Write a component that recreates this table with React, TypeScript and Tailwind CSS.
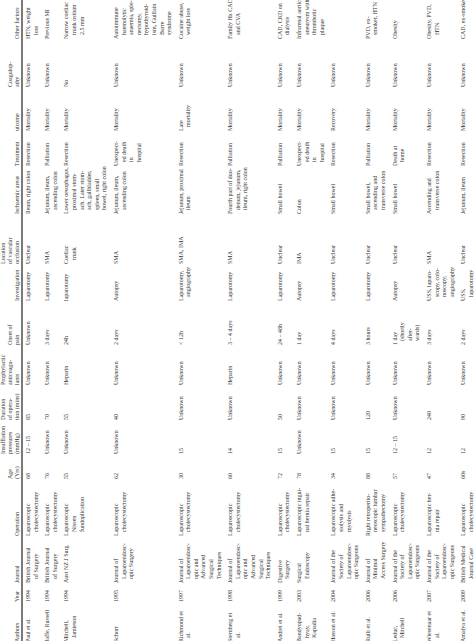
import React from "react";

const GRID =
  "grid grid-cols-[40px_19px_47px_57px_25px_34px_35px_40px_44px_37px_50px_48px_35px_44px_48px_60px]";

const headers = [
  "Authors",
  "Year",
  "Journal",
  "Operation",
  "Age\n(Yrs)",
  "Insufflation\npressures\n(mmHg)",
  "Duration\nof opera-\ntion (mins)",
  "Prophylactic\nanticoagu-\nlants",
  "Onset of\npain",
  "Investigation",
  "Location\nof vascular\nocclusion",
  "Ischaemic areas",
  "Treatment",
  "utcome",
  "Coagulop-\nathy",
  "Other factors",
];

const rows: string[][] = [
  ["Paul et al.", "1994", "British Journal\nof Surgery", "Laparoscopic\ncholecystectomy", "68", "12 – 15", "85", "Unknown", "Unknown", "Laparotomy", "Unclear", "Ileum, right colon", "Resection", "Mortality", "Unknown", "HTN, weight\nloss"],
  ["Jaffe, Russell", "1994", "British Journal\nof Surgery", "Laparoscopic\ncholecystectomy", "76", "Unknown", "70", "Unknown", "3 days", "Laparotomy", "SMA", "Jejunum, ileum,\nascending colon", "Palliation", "Mortality", "Unknown", "Previous MI"],
  ["Mitchell,\nJamieson", "1994", "Aust NZ J Surg", "Laparoscopic\nNissen\nfundoplication", "55", "Unknown", "55", "Heparin", "24h", "laparotomy", "Coeliac\ntrunk", "Lower oesophagus,\nproximal stom-\nach. Later stom-\nach, gallbladder,\nspleen, small\nbowel, right colon", "Resection", "Mortality", "No", "Narrow coeliac\ntrunk ostium\n2.5 mm"],
  ["Schorr", "1995", "Journal of\nLaparoendosc-\nopic Surgery", "Laparoscopic\ncholecystectomy", "62", "Unknown", "40", "Unknown", "2 days", "Autopsy", "SMA", "Jejunum, ileum,\nascending colon", "Unexpect-\ned death\nin\nhospital", "Mortality", "Unknown", "Autoimmune\nhaemolytic\nanaemia, sple-\nnectomy,\nhypothyroid-\nism, Guillain\nBarre\nsyndrome"],
  ["Richmond et\nal.", "1997", "Journal of\nLaparoendosc-\nopic and\nAdvanced\nSurgical\nTechniques", "Laparoscopic\ncholecystectomy", "30", "15", "Unknown", "Unknown", "< 12h", "Laparotomy,\nangiography", "SMA, IMA", "Jejunum, proximal\nileum", "Resection", "Late\nmortality", "Unknown", "Cocaine abuse,\nweight loss"],
  ["Sternberg et\nal.", "1998", "Journal of\nLaparoendosc-\nopic and\nAdvanced\nSurgical\nTechniques", "Laparoscopic\ncholecystectomy", "60", "14", "Unknown", "Heparin", "3 – 4 days", "Laparotomy", "SMA", "Fourth part of duo-\ndenum, jejunum,\nileum, right colon", "Palliation", "Mortality", "Unknown", "Family Hx CAD\nand CVA"],
  ["Andrei et al.", "1999", "Digestive\nSurgery", "Laparoscopic\ncholecystectomy", "72", "15", "50", "Unknown", "24 – 48h", "Laparotomy", "Unclear", "Small bowel", "Palliation", "Mortality", "Unknown", "CAD, CKD on\ndialysis"],
  ["Bandyopad-\nhyay,\nKapadia", "2003", "Surgical\nEndoscopy", "Laparoscopic ingui-\nnal hernia repair", "78", "Unknown", "Unknown", "Unknown", "1 day", "Autopsy", "IMA", "Colon", "Unexpect-\ned death\nin\nhospital", "Mortality", "Unknown", "Infrarenal aortic\naneurysm with\nthrombotic\nplaque"],
  ["Hasson et al.", "2004", "Journal of the\nSociety of\nLaparoendosc-\nopic Surgeons", "Laparoscopic adhe-\nsiolysis and\nmyolysis", "34", "15", "Unknown", "Unknown", "4 days", "Laparotomy", "Unclear", "Small bowel", "Resection", "Recovery", "Unknown", ""],
  ["Rulli et al.", "2006", "Journal of\nMinimal\nAccess Surgery", "Right retroperito-\nneoscopic lumbar\nsympathectomy", "88", "15", "120", "Unknown", "3 hours", "Laparotomy", "Unclear", "Small bowel,\nascending and\ntransverse colon", "Palliation", "Mortality", "Unknown", "PVD, ex-\nsmoker, HTN"],
  ["Leduc,\nMitchell", "2006", "Journal of the\nSociety of\nLaparoendosc-\nopic Surgeons", "Laparoscopic\ncholecystectomy", "57", "12 – 15", "Unknown", "Unknown", "1 day\n(shortly\nafter-\nwards)", "Autopsy", "Unclear", "Small bowel", "Death at\nhome", "Mortality", "Unknown", "Obesity"],
  ["Wiesenaar et\nal.", "2007", "Journal of the\nSociety of\nLaparoendosc-\nopic Surgeons", "Laparoscopic her-\nnia repair", "47", "12", "240", "Unknown", "3 days", "USS, laparo-\nscopy, colo-\nnoscopy,\nangiography", "SMA", "Ascending and\ntransverse colon", "Resection", "Mortality", "Unknown", "Obesity, PVD,\nHTN"],
  ["Amalya et al.", "2009", "British Medical\nJournal Case\nReports", "Laparoscopic\ncholecystectomy", "60s", "12", "90", "Unknown", "2 days", "USS,\nlaparotomy", "Unclear", "Jejunum, ileum", "Resection", "Mortality", "Unknown", "CAD, ex-smoker"],
];

const Cell: React.FC<{ text: string }> = ({ text }) => (
  <div>
    {text.split("\n").map((line, i) => (
      <div key={i} className={i ? "pl-[4px] whitespace-nowrap" : "whitespace-nowrap"}>
        {line}
      </div>
    ))}
  </div>
);

export default function App() {
  return (
    <div className="w-[474px] h-[641px] overflow-hidden bg-white">
      <div
        className="w-[641px] h-[474px] origin-top-left translate-y-[641px] -rotate-90 text-[6px] leading-[7.6px] text-[#333]"
        style={{ fontFamily: '"Liberation Serif", "Times New Roman", serif' }}
      >
        <div className="ml-[-1px]">
          {/* header row, bottom aligned, heavy rule under it */}
          <div className={`${GRID} items-end border-b-2 border-[#7a7a7a] leading-[7px]`}>
            {headers.map((h, i) => (
              <div key={i}>
                {h.split("\n").map((line, j) => (
                  <div key={j} className="whitespace-nowrap">
                    {line}
                  </div>
                ))}
              </div>
            ))}
          </div>
          {rows.map((r, i) => (
            <div key={i} className={`${GRID} items-start py-[2px]`}>
              {r.map((c, j) => (
                <Cell key={j} text={c} />
              ))}
            </div>
          ))}
        </div>
      </div>
    </div>
  );
}
